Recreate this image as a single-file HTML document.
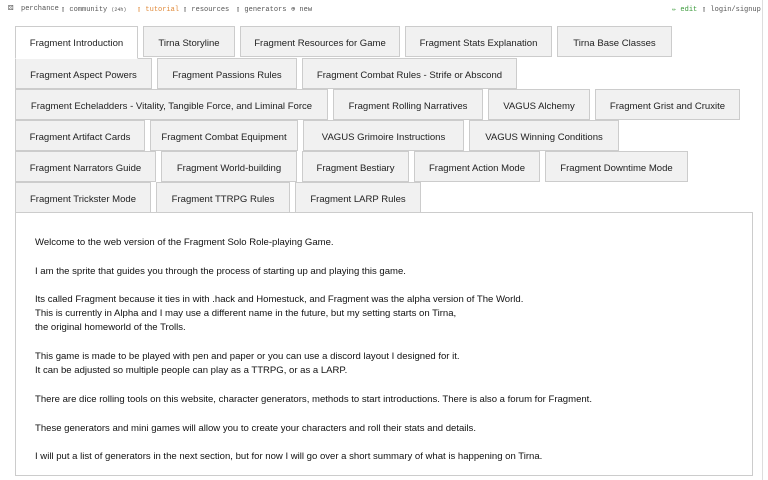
<!DOCTYPE html>
<html><head><meta charset="utf-8"><style>
body{margin:0;width:768px;height:480px;background:#fff;font-family:"Liberation Sans",sans-serif;position:relative;overflow:hidden}
.top{position:absolute;left:0;top:0;width:768px;height:16px;font-family:"Liberation Mono",monospace;font-size:7px;color:#555}
.top span{position:absolute;top:5px}
.t{position:absolute;height:31px;background:#f1f1f1;border:1px solid #ccc;box-sizing:border-box;font-size:9.55px;color:#222;text-align:center;line-height:33px;white-space:nowrap}
.a{background:#fff;border-bottom-color:#fff;z-index:2}
.c{position:absolute;left:15px;top:212px;width:738px;height:264px;border:1px solid #ccc;box-sizing:border-box;background:#fff;font-size:9.55px;color:#111}
.c div{position:absolute;left:19px;white-space:nowrap;margin-top:2px}
.sb{position:absolute;left:762px;top:0;width:1px;height:480px;background:#ddd}
</style></head><body>
<div class="top">
<span style="left:8px;font-size:9px;top:3px">⚄</span>
<span style="left:21px">perchance</span>
<span style="left:61px">▯ community <small style="font-size:5px">(24h)</small></span>
<span style="left:137px;color:#e08a3a">▯ tutorial</span>
<span style="left:183px">▯ resources</span>
<span style="left:236px">▯ generators</span>
<span style="left:291px">⊕ new</span>
<span style="left:672px;color:#3a9a3a">✏ edit</span>
<span style="left:702px">▯ login/signup</span>
</div>
<div class="sb"></div>
<div class="t a" style="left:15px;top:26px;width:123px;height:33px">Fragment Introduction</div>
<div class="t" style="left:143px;top:26px;width:92px">Tirna Storyline</div>
<div class="t" style="left:240px;top:26px;width:160px">Fragment Resources for Game</div>
<div class="t" style="left:405px;top:26px;width:147px">Fragment Stats Explanation</div>
<div class="t" style="left:557px;top:26px;width:115px">Tirna Base Classes</div>
<div class="t" style="left:15px;top:58px;width:137px">Fragment Aspect Powers</div>
<div class="t" style="left:157px;top:58px;width:140px">Fragment Passions Rules</div>
<div class="t" style="left:302px;top:58px;width:215px">Fragment Combat Rules - Strife or Abscond</div>
<div class="t" style="left:15px;top:89px;width:313px">Fragment Echeladders - Vitality, Tangible Force, and Liminal Force</div>
<div class="t" style="left:333px;top:89px;width:150px">Fragment Rolling Narratives</div>
<div class="t" style="left:488px;top:89px;width:102px">VAGUS Alchemy</div>
<div class="t" style="left:595px;top:89px;width:145px">Fragment Grist and Cruxite</div>
<div class="t" style="left:15px;top:120px;width:130px">Fragment Artifact Cards</div>
<div class="t" style="left:150px;top:120px;width:148px">Fragment Combat Equipment</div>
<div class="t" style="left:303px;top:120px;width:161px">VAGUS Grimoire Instructions</div>
<div class="t" style="left:469px;top:120px;width:150px">VAGUS Winning Conditions</div>
<div class="t" style="left:15px;top:151px;width:141px">Fragment Narrators Guide</div>
<div class="t" style="left:161px;top:151px;width:136px">Fragment World-building</div>
<div class="t" style="left:302px;top:151px;width:107px">Fragment Bestiary</div>
<div class="t" style="left:414px;top:151px;width:126px">Fragment Action Mode</div>
<div class="t" style="left:545px;top:151px;width:143px">Fragment Downtime Mode</div>
<div class="t" style="left:15px;top:182px;width:136px">Fragment Trickster Mode</div>
<div class="t" style="left:156px;top:182px;width:134px">Fragment TTRPG Rules</div>
<div class="t" style="left:295px;top:182px;width:126px">Fragment LARP Rules</div>
<div class="c">
<div style="top:22px">Welcome to the web version of the Fragment Solo Role-playing Game.</div>
<div style="top:51px">I am the sprite that guides you through the process of starting up and playing this game.</div>
<div style="top:79px">Its called Fragment because it ties in with .hack and Homestuck, and Fragment was the alpha version of The World.</div>
<div style="top:93px">This is currently in Alpha and I may use a different name in the future, but my setting starts on Tirna,</div>
<div style="top:107px">the original homeworld of the Trolls.</div>
<div style="top:136px">This game is made to be played with pen and paper or you can use a discord layout I designed for it.</div>
<div style="top:150px">It can be adjusted so multiple people can play as a TTRPG, or as a LARP.</div>
<div style="top:179px">There are dice rolling tools on this website, character generators, methods to start introductions. There is also a forum for Fragment.</div>
<div style="top:208px">These generators and mini games will allow you to create your characters and roll their stats and details.</div>
<div style="top:236px">I will put a list of generators in the next section, but for now I will go over a short summary of what is happening on Tirna.</div>
</div>
</body></html>
